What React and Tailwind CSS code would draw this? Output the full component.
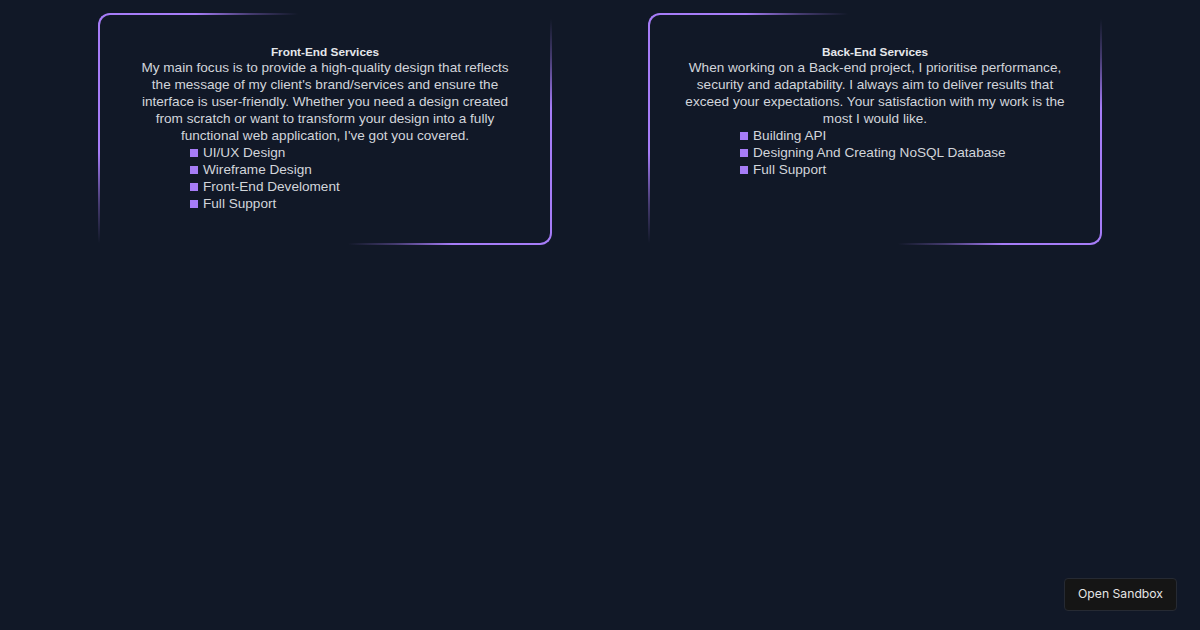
import React from "react";

function Card({ title, text, items }) {
  return (
    <div className="relative w-[454px] rounded-xl p-[2px]">
      {/* decorative gradient border pieces */}
      <div className="pointer-events-none absolute left-0 top-0 h-[14px] w-[14px] rounded-tl-xl border-l-2 border-t-2 border-[#a67cf7]" />
      <div className="pointer-events-none absolute left-[14px] top-0 h-[2px] w-[186px] bg-[linear-gradient(to_right,#a67cf7_0%,#a67cf7_45%,rgba(166,124,247,0.35)_75%,rgba(166,124,247,0)_100%)]" />
      <div className="pointer-events-none absolute left-0 top-[14px] h-[216px] w-[2px] bg-[linear-gradient(to_bottom,#a67cf7_0%,#a67cf7_58%,rgba(166,124,247,0.35)_82%,rgba(166,124,247,0)_100%)]" />
      <div className="pointer-events-none absolute bottom-0 right-0 h-[14px] w-[14px] rounded-br-xl border-b-2 border-r-2 border-[#a67cf7]" />
      <div className="pointer-events-none absolute bottom-0 right-[14px] h-[2px] w-[190px] bg-[linear-gradient(to_left,#a67cf7_0%,#a67cf7_45%,rgba(166,124,247,0.35)_75%,rgba(166,124,247,0)_100%)]" />
      <div className="pointer-events-none absolute right-0 bottom-[14px] h-[212px] w-[2px] bg-[linear-gradient(to_top,#a67cf7_0%,#a67cf7_58%,rgba(166,124,247,0.35)_82%,rgba(166,124,247,0)_100%)]" />

      <div className="h-full px-8 pt-[30px] pb-[31px]">
        <h3 className="text-center text-[11.8px] font-bold leading-[14px] text-[#e5e7eb]">
          {title}
        </h3>
        <p className="text-center text-[13.6px] leading-[17px] text-[#d1d5db]">
          {text}
        </p>
        <ul className="flex flex-col pl-[58px]">
          {items.map((it) => (
            <li
              key={it}
              className="flex items-center gap-[5px] text-[13.6px] leading-[17px] text-[#d1d5db]"
            >
              <span className="inline-block h-[8px] w-[8px] shrink-0 bg-[#a67cf7]" />
              <span>{it}</span>
            </li>
          ))}
        </ul>
      </div>
    </div>
  );
}

export default function App() {
  return (
    <div
      className="relative min-h-[630px] w-full bg-[#111827]"
      style={{ fontFamily: '"Liberation Sans", Arial, sans-serif' }}
    >
      <div className="flex items-stretch justify-center gap-[96px] pt-[13px]">
        <Card
          title="Front-End Services"
          text="My main focus is to provide a high-quality design that reflects the message of my client's brand/services and ensure the interface is user-friendly. Whether you need a design created from scratch or want to transform your design into a fully functional web application, I've got you covered."
          items={["UI/UX Design", "Wireframe Design", "Front-End Develoment", "Full Support"]}
        />
        <Card
          title="Back-End Services"
          text="When working on a Back-end project, I prioritise performance, security and adaptability. I always aim to deliver results that exceed your expectations. Your satisfaction with my work is the most I would like."
          items={["Building API", "Designing And Creating NoSQL Database", "Full Support"]}
        />
      </div>

      <button
        className="absolute bottom-[19px] right-[23px] flex h-[33px] items-center rounded-[4px] border border-[#262a33] bg-[#151515] px-[13px] text-[12.2px] text-[#e5e5e5]"
        style={{ fontFamily: 'Inter, "Liberation Sans", sans-serif' }}
      >
        Open Sandbox
      </button>
    </div>
  );
}
